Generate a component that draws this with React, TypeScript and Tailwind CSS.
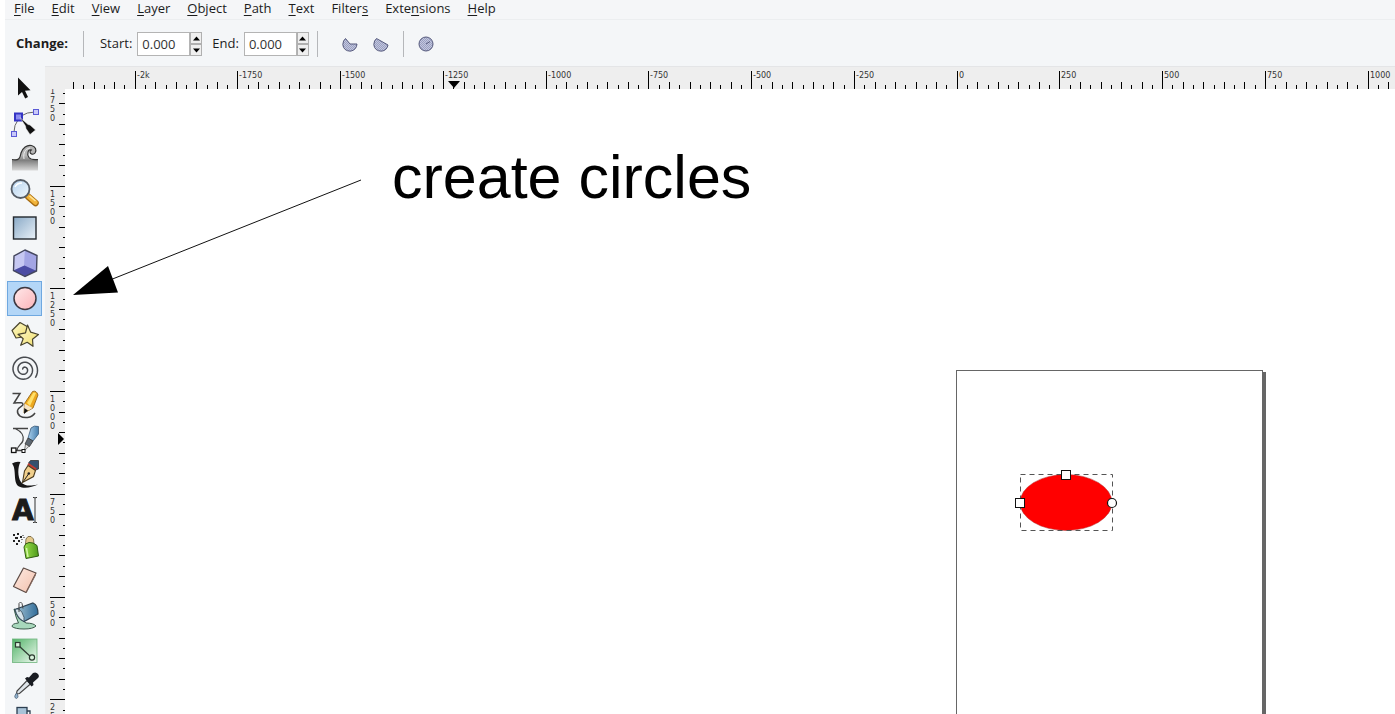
import React from 'react';

const menus = [
  ['', 'F', 'ile'],
  ['', 'E', 'dit'],
  ['', 'V', 'iew'],
  ['', 'L', 'ayer'],
  ['', 'O', 'bject'],
  ['', 'P', 'ath'],
  ['', 'T', 'ext'],
  ['Filter', 's', ''],
  ['Exte', 'n', 'sions'],
  ['', 'H', 'elp'],
];

type Tool = { name: string; art: React.ReactNode };

const spiralPoints = Array.from({ length: 88 }, (_, i) => {
  const turns = 0.2 + (i * 2.6) / 87;
  const angle = (turns + 0.3) * 2 * Math.PI;
  const r = turns * 5;
  return `${(14 + r * Math.cos(angle)).toFixed(2)},${(15.5 + r * Math.sin(angle)).toFixed(2)}`;
}).join(' ');

const selectTools: Tool[] = [
  {
    name: 'Select',
    art: <path d="M8 4.500V22.500l4-3.500 3.200 6.500 2.800-1.500-3-6.200 5.500-.5z" fill="#111" />,
  },
  {
    name: 'Edit nodes',
    art: (
      <>
        <path d="M8 12Q4 17 4 24M11 8Q17 4 25 4" fill="none" stroke="#666" />
        <rect x="5" y="5.500" width="7" height="7" fill="#8c8cf0" stroke="#3434c4" strokeWidth="2" />
        <rect x="23.500" y="1.500" width="5" height="5" fill="#c9c9fa" stroke="#5a5ad6" />
        <rect x="1.500" y="23.500" width="5" height="5" fill="#c9c9fa" stroke="#5a5ad6" />
        <path d="M10 9.500l8 7 2 .5 5.500 5-5.500 4.500-4-6-.5-2.500z" fill="#111" stroke="#eee" strokeWidth=".5" />
      </>
    ),
  },
  {
    name: 'Tweak',
    art: (
      <>
        <path d="M2 16.500c8 1.500 8-2 9-6.500C12.500 5 17 1.500 21.500 2.500c4 1 5.500 4.500 3.500 7.500-1.500 2-5 1.500-5-1 0-1.500 1.500-2 2-2-4-1.500-5.500 4-3 7.500 2 2.500 5 2.500 9 2v11H2z" fill="url(#wave)" />
        <path d="M2 16.500c8 1.500 8-2 9-6.500C12.500 5 17 1.500 21.500 2.500c4 1 5.500 4.500 3.500 7.500-1.500 2-5 1.500-5-1 0-1.500 1.500-2 2-2-4-1.500-5.500 4-3 7.500 2 2.500 5 2.500 9 2" fill="none" stroke="#333" strokeWidth="1.200" />
        <path d="M14 16c-1-6 1-10 6-11" fill="none" stroke="#eee" />
      </>
    ),
  },
  {
    name: 'Zoom',
    art: (
      <>
        <path d="M18 18.500l7.500 6.500" stroke="#a56b12" strokeWidth="6.500" strokeLinecap="round" />
        <path d="M18.500 18.500l7 6" stroke="#f2b43a" strokeWidth="4.500" strokeLinecap="round" />
        <path d="M19.500 18l6 5" stroke="#ffe49a" strokeWidth="1.500" />
        <circle cx="10.500" cy="11" r="9" fill="url(#lens)" stroke="#555c66" strokeWidth="1.800" />
        <path d="M5 9q2-4 7-4" fill="none" stroke="#fff" strokeWidth="1.500" />
      </>
    ),
  },
  {
    name: 'Rectangle',
    art: <rect x="3.500" y="4" width="22.500" height="22" fill="url(#rect)" stroke="#23282e" strokeWidth="1.400" />,
  },
  {
    name: '3D box',
    art: (
      <>
        <path d="M11.500 5L25.500 9v12.500L16 18.500z" fill="#8f91dc" />
        <path d="M15 2l12 5.500-.5 15.500L15 28.500 3.500 22.500 4 8z" fill="#8f92d8" />
        <path d="M4 8l11-6-.500 15.500L3.500 22.500z" fill="#c6c8f2" />
        <path d="M15 2l12 5.500-.5 15.500-12-5.500z" fill="#a3a5e4" />
        <path d="M14.500 17.500l12 5.500L15 28.500 3.500 22.500z" fill="#4b4ca4" />
        <path d="M15 2l12 5.500-.5 15.500L15 28.500 3.500 22.500 4 8z" fill="none" stroke="#44475e" strokeWidth="1.400" />
      </>
    ),
  },
];

const drawTools: Tool[] = [
  {
    name: 'Ellipse',
    art: <circle cx="15" cy="14.500" r="11" fill="url(#pink)" stroke="#3d3840" strokeWidth="1.500" />,
  },
  {
    name: 'Star',
    art: (
      <g fill="url(#yellow)" stroke="#4a452e" strokeWidth="1.200" strokeLinejoin="round">
        <path d="M10 3.500l8 4.500-2 9.500-10 1.500-4-7.500z" />
        <path d="M17.500 6l3.200 7.200 7.800 2.300-6 4.800.5 7-5.800-4-6.500 3 2.500-6.500-5.200-4.500 7.500-1.500z" />
      </g>
    ),
  },
  {
    name: 'Spiral',
    art: <polyline points={spiralPoints} fill="none" stroke="#484b50" strokeWidth="1.500" />,
  },
  {
    name: 'Pencil',
    art: (
      <>
        <path d="M2.500 4.500h7.500L4 14c4 0 9-1.500 9 1.500 0 2-5 2.500-5.500 6-.5 5 4 7.500 10 7 4-.5 6-2 7.500-4.500" fill="none" stroke="#444" strokeWidth="1.500" />
        <path d="M14 24l.5-9.500L22.500 2.500q4-1.500 5.500 3.500L23 19z" fill="#eda81e" stroke="#8a5c10" strokeWidth=".8" />
        <path d="M17 14L23.500 3.500l2.500.5L20 17z" fill="#ffe06a" />
        <path d="M14.500 14.500l8 4.500-8.500 5z" fill="#f5e3c4" />
        <path d="M14.300 19l3.700 2.500-4 3.500z" fill="#111" />
      </>
    ),
  },
  {
    name: 'Bezier',
    art: (
      <>
        <path d="M3 4.500h15M5 4.500c7 3 9 8 8 12s-6 5-6 10M6 26.500h7" fill="none" stroke="#444" strokeWidth="1.300" />
        <path d="M18 14l3-10q3-3 7.500-1.500L28.500 10 23 17z" fill="url(#blue)" stroke="#3b5a78" strokeWidth=".8" />
        <path d="M18 14l5 3-3.500 5.500-4.500-2.500z" fill="#5d6670" stroke="#333" strokeWidth=".8" />
        <path d="M15.500 20l3.500 2.200-4.500 4.500z" fill="#ddd" stroke="#444" strokeWidth=".7" />
        <rect x="1.500" y="24" width="4.500" height="4.500" fill="#fff" stroke="#111" strokeWidth="1.300" />
        <rect x="12" y="25.500" width="3" height="3" fill="#fff" stroke="#111" />
      </>
    ),
  },
  {
    name: 'Calligraphy',
    art: (
      <>
        <path d="M2 4.500q4-2.500 8.500-1.500c-3 5-3 15 .5 20 4 4.500 9 4 17 2.500-6 3-14 4.500-19 2C2.500 24 7 10 2 4.500z" fill="#161616" />
        <path d="M18.500 4l2-2.500h8V10l-3 1z" fill="#35506e" stroke="#222" strokeWidth=".7" />
        <path d="M18 5l8 5.500" stroke="#c33c32" strokeWidth="2.500" />
        <path d="M12.500 23.500L14.500 12 18 6.500l7.500 5-2 6z" fill="#f0cf8c" stroke="#4b3a1c" strokeWidth="1.100" />
        <path d="M13 23l5.500-8" stroke="#222" />
        <circle cx="18.800" cy="14.500" r="1.300" fill="#222" />
      </>
    ),
  },
];

const paintTools: Tool[] = [
  {
    name: 'Text',
    art: (
      <>
        <text x="2" y="25" fontSize="28" fontWeight="700" fill="#1b1b1b" stroke="#1b1b1b" className="font-['DejaVu_Sans',sans-serif]">A</text>
        <path d="M23 2.500h1.500l.5 1 .5-1H27M25 3.500v23M23 27.500h1.500l.5-1 .5 1H27" fill="none" stroke="#333" />
      </>
    ),
  },
  {
    name: 'Spray',
    art: (
      <>
        <path d="M3 4h2v2H3zM7 3h2v2H7zM5 7h3v2H5zM10 6h2v2h-2zM3 10h2v2H3zM8 10h2v2H8zM6 13h2v2H6z" fill="#222" />
        <path d="M12 5h2v1h-2zM11 9h2v1h-2zM13 7h2v1h-2zM11 12h1v1h-1z" fill="#888" />
        <path d="M15.500 14l.5-5 2-2.500h3l2.500 2.500.5 5z" fill="#e3c88c" stroke="#6b5a36" strokeWidth=".8" />
        <path d="M14 17q1-4 5-4.500t8 3L28.500 26 16 28.500z" fill="url(#green)" stroke="#2f5c12" />
        <path d="M16.500 18l1.500 9" stroke="#d5f7a8" strokeWidth="1.500" />
      </>
    ),
  },
  {
    name: 'Eraser',
    art: (
      <>
        <path d="M13.500 3L26 8 16 27.500 3.500 21.500z" fill="url(#peach)" stroke="#5b4a44" strokeWidth="1.200" strokeLinejoin="round" />
        <path d="M26 8v2l-9.500 18-.5-.5z" fill="#8d6c60" />
      </>
    ),
  },
  {
    name: 'Paint bucket',
    art: (
      <>
        <path d="M4 9q2 9 4.500 14Q2 23.500 2 26.500q3 2.500 12 2.500t12-3q-2-2.800-10-3Q9 19 7 10z" fill="#a8d8bc" stroke="#3c5b4c" />
        <path d="M5 9.500L23 3q5 2 5 11L14 21.500Q7.500 19 5 9.500z" fill="url(#bucket)" stroke="#2d4252" strokeWidth="1.200" />
        <path d="M5 9.500q4-2 7 3t2 9Q7.500 18.500 5 9.500z" fill="#d6e4ea" stroke="#2d4252" strokeWidth=".8" />
        <path d="M9 12V3.500q1.500-3 3 0l1 5" fill="none" stroke="#444" />
      </>
    ),
  },
  {
    name: 'Gradient',
    art: (
      <>
        <rect x="2.500" y="4" width="24.500" height="23.500" fill="url(#grad)" stroke="#6db37c" strokeWidth=".8" />
        <path d="M9 11l12 11" stroke="#2c3a30" strokeWidth="1.200" />
        <rect x="5.500" y="7.500" width="4.500" height="4.500" fill="#d9f2dd" stroke="#2c3a30" strokeWidth="1.200" />
        <circle cx="22" cy="22.500" r="2.600" fill="#d9f2dd" stroke="#2c3a30" strokeWidth="1.200" />
      </>
    ),
  },
  {
    name: 'Dropper',
    art: (
      <>
        <path d="M17 10.500l3.500 3.500L9.500 23.500l-3 .5.500-3z" fill="#dfe5ea" stroke="#444" strokeWidth="1.200" />
        <path d="M15 8.500l2-1.500 2 .5 4-4.500q3-1.500 5 1t-.5 4.500L23 12.500l.5 2.500-2 1.500z" fill="#191c22" />
        <path d="M6.500 23q3 4 0 5.500-3.500-1-0-5.500z" fill="#8fb0cc" stroke="#4b6176" strokeWidth=".8" />
      </>
    ),
  },
  {
    name: 'Connector',
    art: (
      <>
        <rect x="7" y="2.500" width="10" height="10" fill="#a9c3d8" stroke="#2c3e50" strokeWidth="1.300" />
        <path d="M17 6h3v8" fill="none" stroke="#2c3e50" strokeWidth="1.300" />
      </>
    ),
  },
];

const toolGroups = [selectTools, drawTools, paintTools];

const Gradients: React.FC = () => (
  <svg className="absolute w-0 h-0" aria-hidden="true">
    <defs>
      <linearGradient id="wave" x1="0" y1="0" x2="0" y2="1">
        <stop offset=".4" stopColor="#b5b5b5" />
        <stop offset=".6" stopColor="#808080" />
        <stop offset="1" stopColor="#d8d8d8" />
      </linearGradient>
      <linearGradient id="lens" x1="0" y1="0" x2="1" y2="1">
        <stop stopColor="#b4d2ee" />
        <stop offset="1" stopColor="#f2f8fd" />
      </linearGradient>
      <linearGradient id="rect" x1="0" y1="0" x2="1" y2="1">
        <stop stopColor="#89a9c6" />
        <stop offset="1" stopColor="#eaf2f9" />
      </linearGradient>
      <linearGradient id="pink" x1="0" y1="0" x2="1" y2="1">
        <stop stopColor="#ffe9ea" />
        <stop offset="1" stopColor="#fbb3b8" />
      </linearGradient>
      <linearGradient id="yellow" x1="0" y1="0" x2="1" y2="1">
        <stop stopColor="#fdf9cf" />
        <stop offset="1" stopColor="#f1df6b" />
      </linearGradient>
      <linearGradient id="blue" x1="0" y1="0" x2="1" y2="0">
        <stop stopColor="#a9cfec" />
        <stop offset="1" stopColor="#477fae" />
      </linearGradient>
      <linearGradient id="green" x1="0" y1="0" x2="1" y2="0">
        <stop stopColor="#9be04a" />
        <stop offset="1" stopColor="#4e9a1c" />
      </linearGradient>
      <linearGradient id="peach" x1="0" y1="0" x2="1" y2="1">
        <stop stopColor="#fdeae2" />
        <stop offset="1" stopColor="#f3c0ac" />
      </linearGradient>
      <linearGradient id="bucket" x1="0" y1="0" x2="1" y2="0">
        <stop stopColor="#a6c4d2" />
        <stop offset="1" stopColor="#2f6c9a" />
      </linearGradient>
      <linearGradient id="grad" x1="0" y1="0" x2="1" y2="1">
        <stop stopColor="#52b368" />
        <stop offset="1" stopColor="#f0faf1" />
      </linearGradient>
      <pattern id="hatch" width="2" height="2" patternUnits="userSpaceOnUse">
        <rect width="2" height="2" fill="#c3c7de" />
        <rect width="1" height="1" fill="#9aa0c2" />
        <rect x="1" y="1" width="1" height="1" fill="#9aa0c2" />
      </pattern>
    </defs>
  </svg>
);

const SpinBox: React.FC<{ id: string; label: string }> = ({ id, label }) => (
  <div className="flex items-center">
    <label htmlFor={id} className="mr-[5px]">{label}</label>
    <input id={id} defaultValue="0.000" className="w-[53px] h-6 px-1 bg-white border border-[#b4b4b4] text-[#333] outline-none" />
    <div className="flex flex-col w-3 h-6">
      <button aria-label={`Increase ${label}`} className="flex-1 flex items-center justify-center bg-[#efefef] border border-[#b0b0b0]">
        <svg width="7" height="5" viewBox="0 0 7 5"><path d="M0 4.500L3.500.5 7 4.500z" /></svg>
      </button>
      <button aria-label={`Decrease ${label}`} className="flex-1 flex items-center justify-center bg-[#efefef] border border-[#b0b0b0]">
        <svg width="7" height="5" viewBox="0 0 7 5"><path d="M0 .5L3.500 4.500 7 .5z" /></svg>
      </button>
    </div>
  </div>
);

const Separator: React.FC = () => <div className="w-px h-[26px] bg-[#b5b7ba]" />;

// 250 document units between major ticks, ten subdivisions each
const STEP = 102.75;
const ORIGIN_X = 911.7;
const ORIGIN_Y = 713;

const tickRange = (from: number, to: number) =>
  Array.from({ length: to - from + 1 }, (_, i) => from + i);

const HorizontalRuler: React.FC = () => (
  <svg className="block w-full h-[23px] bg-[#eeeeee] border-t border-[#e4e5e7]" shapeRendering="crispEdges">
    {tickRange(-86, 60).map((n) => {
      const x = Math.round(ORIGIN_X + (n * STEP) / 10);
      const major = n % 10 === 0;
      const top = major ? 4 : n % 2 === 0 ? 15 : 18;
      return (
        <g key={n}>
          <rect x={x} y={top} width="1" height={22 - top} fill="#000" />
          {major && (
            <text x={x + 2} y="11" fontSize="8" fill="#333">
              {n === -80 ? '-2k' : n * 25}
            </text>
          )}
        </g>
      );
    })}
    <path d="M403 14h12l-6 7z" shapeRendering="auto" />
  </svg>
);

const VerticalRuler: React.FC = () => (
  <svg className="block shrink-0 w-5 h-full bg-[#eeeeee]" shapeRendering="crispEdges">
    {tickRange(-20, 70).map((n) => {
      const y = Math.round(ORIGIN_Y - (n * STEP) / 10);
      const major = n % 10 === 0;
      const left = major ? 5 : n % 2 === 0 ? 14 : 18;
      return (
        <g key={n}>
          <rect x={left} y={y} width={20 - left} height="1" fill="#000" />
          {major &&
            String(n * 25).split('').map((digit, i) => (
              <text key={i} x="5" y={y + 11 + i * 9} fontSize="8" fill="#333">{digit}</text>
            ))}
        </g>
      );
    })}
    <path d="M13 344v12l6-6z" shapeRendering="auto" />
  </svg>
);

const Canvas: React.FC = () => (
  <main className="relative flex-1 overflow-hidden bg-white">
    <svg className="absolute inset-0 w-full h-full">
      {/* Page border and its shadow */}
      <rect x="1198" y="283" width="3" height="1200" fill="#666" />
      <rect x="891.5" y="281.5" width="306" height="1200" fill="#fff" stroke="#666" />

      {/* Selected ellipse */}
      <ellipse cx="1001" cy="413.500" rx="46" ry="28" fill="#f00" stroke="#a33" strokeWidth=".5" />
      <rect x="955.5" y="385.5" width="92" height="56" fill="none" stroke="#555" strokeDasharray="5 4" />
      <rect x="996.5" y="381.500" width="9" height="9" fill="#fff" stroke="#111" />
      <rect x="950.5" y="409.500" width="9" height="9" fill="#fff" stroke="#111" />
      <circle cx="1047" cy="414" r="4.500" fill="#fff" stroke="#111" strokeWidth="1.200" />

      {/* Arrow */}
      <path d="M296 91L45 191" stroke="#111" />
      <path d="M8 206l35-29 10 26.500z" fill="#000" />
    </svg>
    <p className="absolute left-[327px] top-[52px] font-['Liberation_Sans',Arial,sans-serif] text-[61px] leading-[72px] text-black whitespace-nowrap">
      create circles
    </p>
  </main>
);

const App: React.FC = () => {
  return (
    <div className="h-screen flex flex-col overflow-hidden bg-white pl-[5px] font-['Open_Sans','Noto_Sans',sans-serif] text-[#1c1c1c]">
      <Gradients />

      {/* Menu bar */}
      <nav className="shrink-0 flex items-center gap-[17px] h-5 pl-[9px] pb-[3px] bg-[#f5f6f8] text-[13px] border-b border-[#eceef0]">
        {menus.map(([before, key, after]) => (
          <button key={before + key + after} className="leading-4 whitespace-nowrap">
            {before}<u className="underline-offset-2">{key}</u>{after}
          </button>
        ))}
      </nav>

      {/* Tool options */}
      <div className="shrink-0 flex items-center h-[46px] pt-0.5 pl-[11px] bg-[#f4f6f8] text-[13px]">
        <span className="font-bold mr-[15px]">Change:</span>
        <Separator />
        <div className="flex items-center gap-2.5 ml-4 mr-2">
          <SpinBox id="start" label="Start:" />
          <SpinBox id="end" label="End:" />
        </div>
        <Separator />
        <div className="flex items-center gap-[15px] ml-6 mr-[14px]">
          <button aria-label="Switch to slice">
            <svg width="16" height="16" viewBox="0 0 16 16">
              <path d="M3.500 2.500L8 8h7q-.5 6-6.500 7.200Q1.500 15 .8 8.500 1 4.500 3.500 2.500z" fill="url(#hatch)" stroke="#55597c" />
            </svg>
          </button>
          <button aria-label="Switch to arc">
            <svg width="16" height="16" viewBox="0 0 16 16">
              <path d="M3.500 2.500L15 9q-1 5.500-6.500 6.200Q1.500 15 .8 8.500 1 4.500 3.500 2.500z" fill="url(#hatch)" stroke="#55597c" />
            </svg>
          </button>
        </div>
        <Separator />
        <button aria-label="Make whole ellipse" className="ml-[14px]">
          <svg width="16" height="16" viewBox="0 0 16 16">
            <circle cx="8" cy="8" r="7" fill="url(#hatch)" stroke="#55597c" />
            <path d="M8 8l4-2.500" stroke="#55597c" />
          </svg>
        </button>
      </div>

      <div className="flex-1 flex min-h-0">
        {/* Toolbox */}
        <aside className="shrink-0 flex flex-col gap-px w-10 pt-1 pl-0.5 bg-[#f4f6f8] overflow-hidden">
          {toolGroups.map((tools, i) => (
            <div key={i} className="shrink-0">
              {tools.map((tool) => (
                <button
                  key={tool.name}
                  aria-label={tool.name}
                  className={`flex items-center justify-center w-[35px] h-[35px] border ${
                    tool.name === 'Ellipse' ? 'bg-[#b3d6f7] border-[#6fa8e0]' : 'border-transparent'
                  }`}
                >
                  <svg className="shrink-0 overflow-visible" width="29" height="29" viewBox="0 0 29 29">{tool.art}</svg>
                </button>
              ))}
            </div>
          ))}
        </aside>

        {/* Rulers and drawing area */}
        <div className="flex-1 flex flex-col min-w-0 font-['DejaVu_Sans',sans-serif]">
          <HorizontalRuler />
          <div className="flex-1 flex min-h-0">
            <VerticalRuler />
            <Canvas />
          </div>
        </div>
      </div>
    </div>
  );
};

export default App;
